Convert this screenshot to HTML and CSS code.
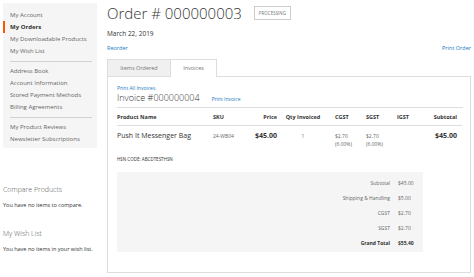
FILE: index.html
```html
<!DOCTYPE html>
<html lang="en">
<head>
    <meta charset="UTF-8">
    <meta name="viewport" content="width=device-width, initial-scale=1.0">
    <title>Order # 000000003</title>
    <link rel="stylesheet" href="styles.css">
</head>
<body>
    <div class="page">
        <aside class="sidebar">
            <ul class="account-nav">
                <li><a href="#">My Account</a></li>
                <li class="current"><strong>My Orders</strong></li>
                <li><a href="#">My Downloadable Products</a></li>
                <li><a href="#">My Wish List</a></li>
                <li class="delimiter"></li>
                <li><a href="#">Address Book</a></li>
                <li><a href="#">Account Information</a></li>
                <li><a href="#">Stored Payment Methods</a></li>
                <li><a href="#">Billing Agreements</a></li>
                <li class="delimiter"></li>
                <li><a href="#">My Product Reviews</a></li>
                <li><a href="#">Newsletter Subscriptions</a></li>
            </ul>
            <div class="block compare">
                <h3>Compare Products</h3>
                <p>You have no items to compare.</p>
            </div>
            <div class="block wishlist">
                <h3>My Wish List</h3>
                <p>You have no items in your wish list.</p>
            </div>
        </aside>

        <main class="main">
            <div class="title-row">
                <h1>Order # 000000003</h1>
                <span class="status">Processing</span>
            </div>
            <div class="order-date">March 22, 2019</div>
            <div class="actions">
                <a href="#">Reorder</a>
                <a href="#">Print Order</a>
            </div>

            <div class="tabs">
                <a href="#" class="tab">Items Ordered</a>
                <a href="#" class="tab active">Invoices</a>
            </div>
            <div class="tab-content">
                <a href="#" class="print-all">Print All Invoices</a>
                <div class="invoice-title">
                    <h2>Invoice #000000004</h2>
                    <a href="#">Print Invoice</a>
                </div>

                <table class="items">
                    <colgroup>
                        <col class="c-name">
                        <col class="c-sku">
                        <col class="c-price">
                        <col class="c-qty">
                        <col class="c-tax1">
                        <col class="c-tax2">
                        <col class="c-tax3">
                        <col class="c-subtotal">
                    </colgroup>
                    <thead>
                        <tr>
                            <th>Product Name</th>
                            <th>SKU</th>
                            <th class="price">Price</th>
                            <th class="qty">Qty Invoiced</th>
                            <th class="tax">CGST</th>
                            <th class="tax">SGST</th>
                            <th class="tax">IGST</th>
                            <th class="subtotal">Subtotal</th>
                        </tr>
                    </thead>
                    <tbody>
                        <tr>
                            <td class="name">Push It Messenger Bag</td>
                            <td class="sku">24-WB04</td>
                            <td class="price"><strong>$45.00</strong></td>
                            <td class="qty">1</td>
                            <td class="tax">$2.70<br>(6.00%)</td>
                            <td class="tax">$2.70<br>(6.00%)</td>
                            <td class="tax"></td>
                            <td class="subtotal"><strong>$45.00</strong></td>
                        </tr>
                    </tbody>
                </table>
                <div class="hsn">HSN CODE: ABCDTESTHSN</div>

                <div class="totals">
                    <div class="row"><span>Subtotal</span><span>$45.00</span></div>
                    <div class="row"><span>Shipping &amp; Handling</span><span>$5.00</span></div>
                    <div class="row"><span>CGST</span><span>$2.70</span></div>
                    <div class="row"><span>SGST</span><span>$2.70</span></div>
                    <div class="row grand"><span>Grand Total</span><span>$55.40</span></div>
                </div>
            </div>
        </main>
    </div>
</body>
</html>
```

FILE: styles.css
```css
body {
    font-family: "Open Sans", "Liberation Sans", sans-serif;
    margin: 0;
    padding: 3px;
    color: #333;
    background: #fff;
}
a {
    color: #1979c3;
    text-decoration: none;
}
.page {
    display: flex;
    gap: 10px;
}

/* sidebar */
.sidebar {
    width: 94px;
    flex-shrink: 0;
}
.account-nav {
    list-style: none;
    margin: 0;
    padding: 6px 0 3px;
    background: #f5f5f5;
}
.account-nav li {
    font-size: 6px;
    line-height: 12px;
    padding-left: 7px;
    white-space: nowrap;
}
.account-nav li a {
    color: #666;
}
.account-nav li.current {
    border-left: 2px solid #ff5501;
    padding-left: 5px;
}
.account-nav li.delimiter {
    height: 1px;
    background: #d1d1d1;
    margin: 4px 5px 3px 7px;
    padding: 0;
}
.block {
    padding-top: 36px;
}
.block + .block {
    padding-top: 18px;
}
.block h3 {
    margin: 0;
    font-size: 7px;
    font-weight: 300;
    color: #575757;
    line-height: 12px;
}
.block p {
    margin: 4px 0 0;
    font-size: 5.5px;
    line-height: 10px;
}

/* main */
.main {
    width: 364px;
}
.title-row {
    display: flex;
    align-items: center;
    gap: 12px;
    height: 20px;
}
.title-row h1 {
    margin: 0;
    font-size: 15px;
    font-weight: 300;
    line-height: 20px;
}
.status {
    border: 1px solid #ccc;
    font-size: 4.5px;
    text-transform: uppercase;
    color: #777;
    padding: 3px 4px;
    line-height: 6px;
}
.order-date {
    font-size: 6.5px;
    line-height: 10px;
    margin-top: 6px;
}
.actions {
    display: flex;
    justify-content: space-between;
    font-size: 5.5px;
    line-height: 10px;
    margin-top: 4px;
}

/* tabs */
.tabs {
    display: flex;
    margin-top: 6px;
    height: 17px;
}
.tab {
    font-size: 5.5px;
    line-height: 16px;
    color: #777;
    text-align: center;
    background: #f0f0f0;
    border: 1px solid #ddd;
    border-bottom: none;
    width: 62px;
}
.tab.active {
    background: #fff;
    width: 45px;
    border-left: none;
    margin-bottom: -1px;
    height: 17px;
    position: relative;
}
.tab-content {
    border: 1px solid #ddd;
    padding: 7px 7px 20px 9px;
}
.print-all {
    font-size: 5px;
    line-height: 8px;
    display: block;
}
.invoice-title {
    display: flex;
    align-items: baseline;
    gap: 12px;
    border-bottom: 1px solid #ddd;
    padding-bottom: 3px;
}
.invoice-title h2 {
    margin: 0;
    font-size: 9px;
    font-weight: 300;
    line-height: 12px;
}
.invoice-title a {
    font-size: 5px;
}

/* items table */
.items {
    width: 345px;
    table-layout: fixed;
    border-collapse: collapse;
}
.c-name { width: 96px; }
.c-sku { width: 34px; }
.c-price { width: 30px; }
.c-qty { width: 52px; }
.c-tax1 { width: 33px; }
.c-tax2 { width: 31px; }
.c-tax3 { width: 32px; }
.c-subtotal { width: 37px; }
.items th {
    font-size: 5.5px;
    font-weight: 700;
    text-align: left;
    height: 17px;
    padding: 0;
    border-bottom: 1px solid #ddd;
}
.items td {
    font-size: 5px;
    line-height: 8px;
    padding: 6px 0 0;
    vertical-align: top;
    color: #666;
}
.items td.name {
    font-size: 7px;
    color: #333;
}
.items td strong {
    font-size: 7px;
    color: #333;
}
.items .price {
    text-align: right;
}
.items .qty {
    text-align: center;
}
.items .tax {
    padding-left: 6px;
}
.items td.tax + td.tax,
.items th.tax + th.tax {
    padding-left: 4px;
}
.items .subtotal {
    text-align: right;
    padding-right: 5px;
}
.hsn {
    font-size: 4.5px;
    text-transform: uppercase;
    margin-top: 7px;
    line-height: 8px;
}

/* totals */
.totals {
    width: 306px;
    background: #f5f5f5;
    margin-top: 9px;
    padding: 4px 0;
    box-sizing: border-box;
    height: 80px;
}
.totals .row {
    display: flex;
    justify-content: flex-end;
    font-size: 5px;
    line-height: 15px;
    color: #666;
}
.totals .row span:first-child {
    text-align: right;
}
.totals .row span:last-child {
    width: 33px;
    padding-left: 8px;
    box-sizing: border-box;
}
.totals .row.grand {
    font-weight: 700;
    color: #333;
}
```
